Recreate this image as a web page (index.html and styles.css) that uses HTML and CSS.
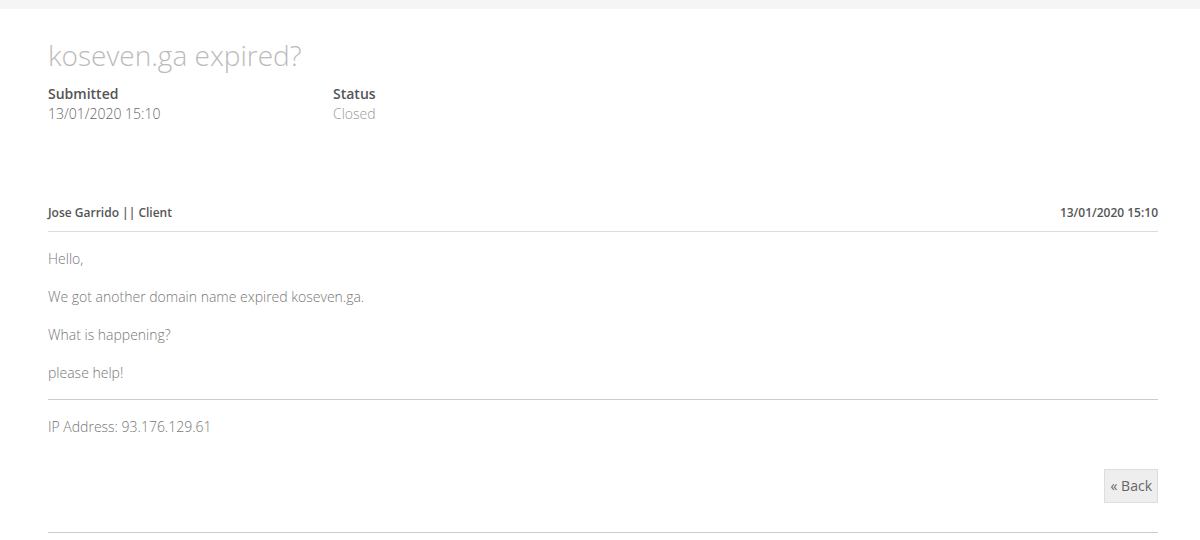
FILE: index.html
```html
<!DOCTYPE html>
<html>
<head>
<meta charset="utf-8">
<link rel="stylesheet" href="styles.css">
</head>
<body>
<div class="topbar"></div>
<div class="page">
  <h1 class="title">koseven.ga expired?</h1>
  <div class="meta">
    <div class="meta-col">
      <div class="meta-label">Submitted</div>
      <div class="meta-value">13/01/2020 15:10</div>
    </div>
    <div class="meta-col">
      <div class="meta-label">Status</div>
      <div class="meta-value">Closed</div>
    </div>
  </div>
  <div class="reply">
    <div class="reply-head">
      <span class="author">Jose Garrido || Client</span>
      <span class="date">13/01/2020 15:10</span>
    </div>
    <div class="reply-body">
      <p>Hello,</p>
      <p>We got another domain name expired koseven.ga.</p>
      <p>What is happening?</p>
      <p>please help!</p>
    </div>
    <div class="reply-ip">IP Address: 93.176.129.61</div>
  </div>
  <div class="actions">
    <a class="btn-back" href="#">&laquo; Back</a>
  </div>
  <div class="end-rule"></div>
</div>
</body>
</html>
```
FILE: styles.css
```css
* { box-sizing: border-box; }
html, body { margin: 0; padding: 0; background: #fff; }
body { font-family: "Open Sans", "Liberation Sans", sans-serif; color: #777; }
.topbar { height: 9px; background: #f5f5f5; }
.page { margin: 0 42px 0 48px; }
.title { font-weight: 300; font-size: 28px; line-height: 32px; color: #bbb; margin: 0; padding-top: 30px; }
.meta { display: flex; margin-top: 13px; }
.meta-col { width: 285px; }
.meta-label { font-weight: 600; font-size: 14px; line-height: 20px; color: #555; }
.meta-value { font-weight: 300; font-size: 14px; line-height: 20px; color: #666; }
.meta-col:nth-child(2) .meta-value { color: #999; }
.reply { margin-top: 80px; }
.reply-head { display: flex; justify-content: space-between; align-items: baseline; font-size: 12px; font-weight: 600; color: #555; line-height: 18px; padding-bottom: 9px; border-bottom: 1px solid #ddd; }
.reply-body { padding-top: 17px; border-bottom: 1px solid #ccc; }
.reply-body p { margin: 0 0 18px; font-size: 14px; line-height: 20px; font-weight: 300; color: #777; }
.reply-body p:last-child { margin-bottom: 16px; }
.reply-ip { padding-top: 17px; font-size: 14px; line-height: 20px; font-weight: 300; color: #777; }
.actions { display: flex; justify-content: flex-end; margin-top: 32px; }
.btn-back { display: inline-block; background: #eee; border: 1px solid #ddd; color: #666; text-decoration: none; font-size: 14px; line-height: 20px; padding: 6px 5px 6px 6px; font-weight: 400; }
.end-rule { margin-top: 29px; border-top: 1px solid #ccc; }
```
